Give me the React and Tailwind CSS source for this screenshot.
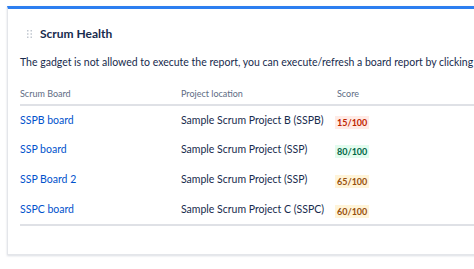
const rows = [
  { board: "SSPB board", project: "Sample Scrum Project B (SSPB)", score: "15/100", tone: "red" },
  { board: "SSP board", project: "Sample Scrum Project (SSP)", score: "80/100", tone: "green" },
  { board: "SSP Board 2", project: "Sample Scrum Project (SSP)", score: "65/100", tone: "yellow" },
  { board: "SSPC board", project: "Sample Scrum Project C (SSPC)", score: "60/100", tone: "yellow" },
]

const toneClasses = {
  red: "bg-[#FFEBE6] text-[#BF2600]",
  green: "bg-[#E3FCEF] text-[#006644]",
  yellow: "bg-[#FFF4D9] text-[#974F0C]",
}

const DragHandle = () => (
  <svg width="5" height="8" viewBox="0 0 5 8" className="fill-[#C1C7D0]">
    <rect x="0" y="0" width="1.5" height="1.5" />
    <rect x="3.5" y="0" width="1.5" height="1.5" />
    <rect x="0" y="3.25" width="1.5" height="1.5" />
    <rect x="3.5" y="3.25" width="1.5" height="1.5" />
    <rect x="0" y="6.5" width="1.5" height="1.5" />
    <rect x="3.5" y="6.5" width="1.5" height="1.5" />
  </svg>
)

export default function App() {
  return (
    <div className="w-[474px] h-[269px] overflow-hidden bg-white font-['Lato',sans-serif]">
      <div className="ml-[7px] mt-[6px] w-[540px] h-[249px] border-t-[3px] border-t-[#2D7FF0] border-l border-b border-[#E4E6EA] bg-white shadow-[0_1px_2px_rgba(9,30,66,0.15)]">
        {/* Header */}
        <div className="flex items-center h-[42px] pt-[7px] pl-[19px]">
          <DragHandle />
          <h2 className="ml-[8px] text-[12px] font-bold text-[#172B4D]">Scrum Health</h2>
        </div>

        <div className="pl-[12px] pr-[10px]">
          <p className="h-[22px] leading-[22px] text-[10.5px] text-[#172B4D] whitespace-nowrap">
            The gadget is not allowed to execute the report, you can execute/refresh a board report by clicking
          </p>

          {/* Table */}
          <table className="mt-[10px] w-[510px] border-collapse text-left table-fixed">
            <thead>
              <tr className="border-b-2 border-[#DFE1E6]">
                <th className="w-[161px] h-[22px] text-[9px] font-normal text-[#5E6C84]">Scrum Board</th>
                <th className="w-[156px] h-[22px] text-[9px] font-normal text-[#5E6C84]">Project location</th>
                <th className="h-[22px] text-[9px] font-normal text-[#5E6C84]">Score</th>
              </tr>
            </thead>
            <tbody className="border-b-2 border-[#DFE1E6]">
              {rows.map((row) => (
                <tr key={row.board}>
                  <td className="h-[30px] text-[10.5px] text-[#0052CC] whitespace-nowrap">{row.board}</td>
                  <td className="h-[30px] text-[10.5px] text-[#172B4D] whitespace-nowrap">{row.project}</td>
                  <td className="h-[30px]">
                    <span className={`inline-block -ml-[2px] px-[2px] leading-[13px] text-[9px] font-bold align-middle ${toneClasses[row.tone]}`}>
                      {row.score}
                    </span>
                  </td>
                </tr>
              ))}
            </tbody>
          </table>
        </div>
      </div>
    </div>
  )
}
